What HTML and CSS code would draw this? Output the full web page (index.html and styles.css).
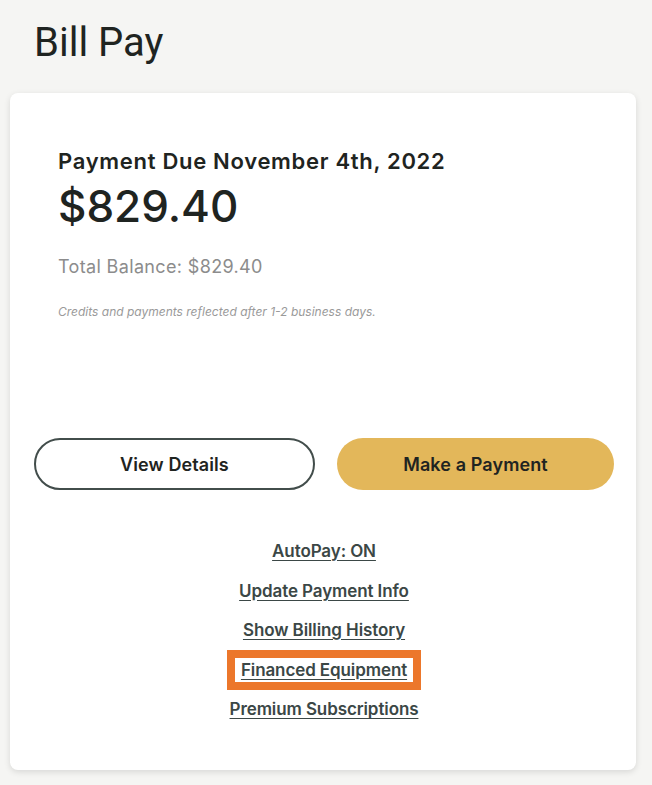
FILE: index.html
```html
<!DOCTYPE html>
<html>
<head>
<meta charset="utf-8">
<link rel="stylesheet" href="styles.css">
</head>
<body>
<div class="page">
  <h1 class="title">Bill Pay</h1>
  <div class="card">
    <div class="summary">
      <div class="due">Payment Due November 4th, 2022</div>
      <div class="amount">$829.40</div>
      <div class="balance">Total Balance: $829.40</div>
      <div class="note">Credits and payments reflected after 1-2 business days.</div>
    </div>
    <div class="actions">
      <a class="btn btn-outline">View Details</a>
      <a class="btn btn-primary">Make a Payment</a>
    </div>
    <ul class="links">
      <li><a class="link">AutoPay: ON</a></li>
      <li><a class="link">Update Payment Info</a></li>
      <li><a class="link">Show Billing History</a></li>
      <li><a class="link highlight">Financed Equipment</a></li>
      <li><a class="link">Premium Subscriptions</a></li>
    </ul>
  </div>
</div>
</body>
</html>
```
FILE: styles.css
```css
html, body {
  margin: 0;
  padding: 0;
  background: #f5f5f3;
}
.page {
  padding: 18px 16px 15px 10px;
  font-family: "Inter", "Open Sans", sans-serif;
  color: #1f2421;
}
.title {
  margin: 0 0 0 24px;
  font-family: "Roboto", sans-serif;
  font-weight: 400;
  font-size: 40px;
  line-height: 50px;
  color: #1f2421;
  height: 75px;
}
.card {
  background: #fff;
  border-radius: 8px;
  box-shadow: 0 2px 6px rgba(0,0,0,0.12);
  padding: 52px 22px 48px 24px;
  height: 577px;
}
.summary {
  padding-left: 24px;
  height: 292px;
}
.due {
  font-weight: 600;
  font-size: 22px;
  letter-spacing: 0.7px;
  line-height: 30px;
  margin-top: 1px;
}
.amount {
  font-weight: 500;
  font-size: 44px;
  line-height: 52px;
  margin-top: 4px;
}
.balance {
  margin-top: 24px;
  font-size: 18px;
  letter-spacing: 0.35px;
  color: #8c8c8c;
}
.note {
  margin-top: 27px;
  font-size: 12px;
  font-style: italic;
  color: #9a9a9a;
}
.actions {
  display: flex;
  gap: 22px;
}
.btn {
  flex: 1;
  height: 52px;
  box-sizing: border-box;
  border-radius: 26px;
  display: flex;
  align-items: center;
  justify-content: center;
  font-weight: 600;
  font-size: 18px;
  letter-spacing: 0.1px;
  color: #1f2421;
}
.btn-outline {
  border: 2px solid #424d4b;
  background: #fff;
}
.btn-primary {
  background: #e3b75a;
}
.links {
  list-style: none;
  margin: 49px 0 0;
  padding: 0;
  display: flex;
  flex-direction: column;
  align-items: center;
  gap: 15.5px;
}
.links li {
  line-height: 24px;
}
.link {
  font-weight: 600;
  font-size: 17px;
  letter-spacing: -0.1px;
  color: #3b4746;
  text-decoration: underline;
  text-underline-offset: 3px;
  display: inline-block;
}
.highlight {
  border: 8px solid #ec772b;
  padding: 0 6px;
  margin: -8px 0;
}
```
